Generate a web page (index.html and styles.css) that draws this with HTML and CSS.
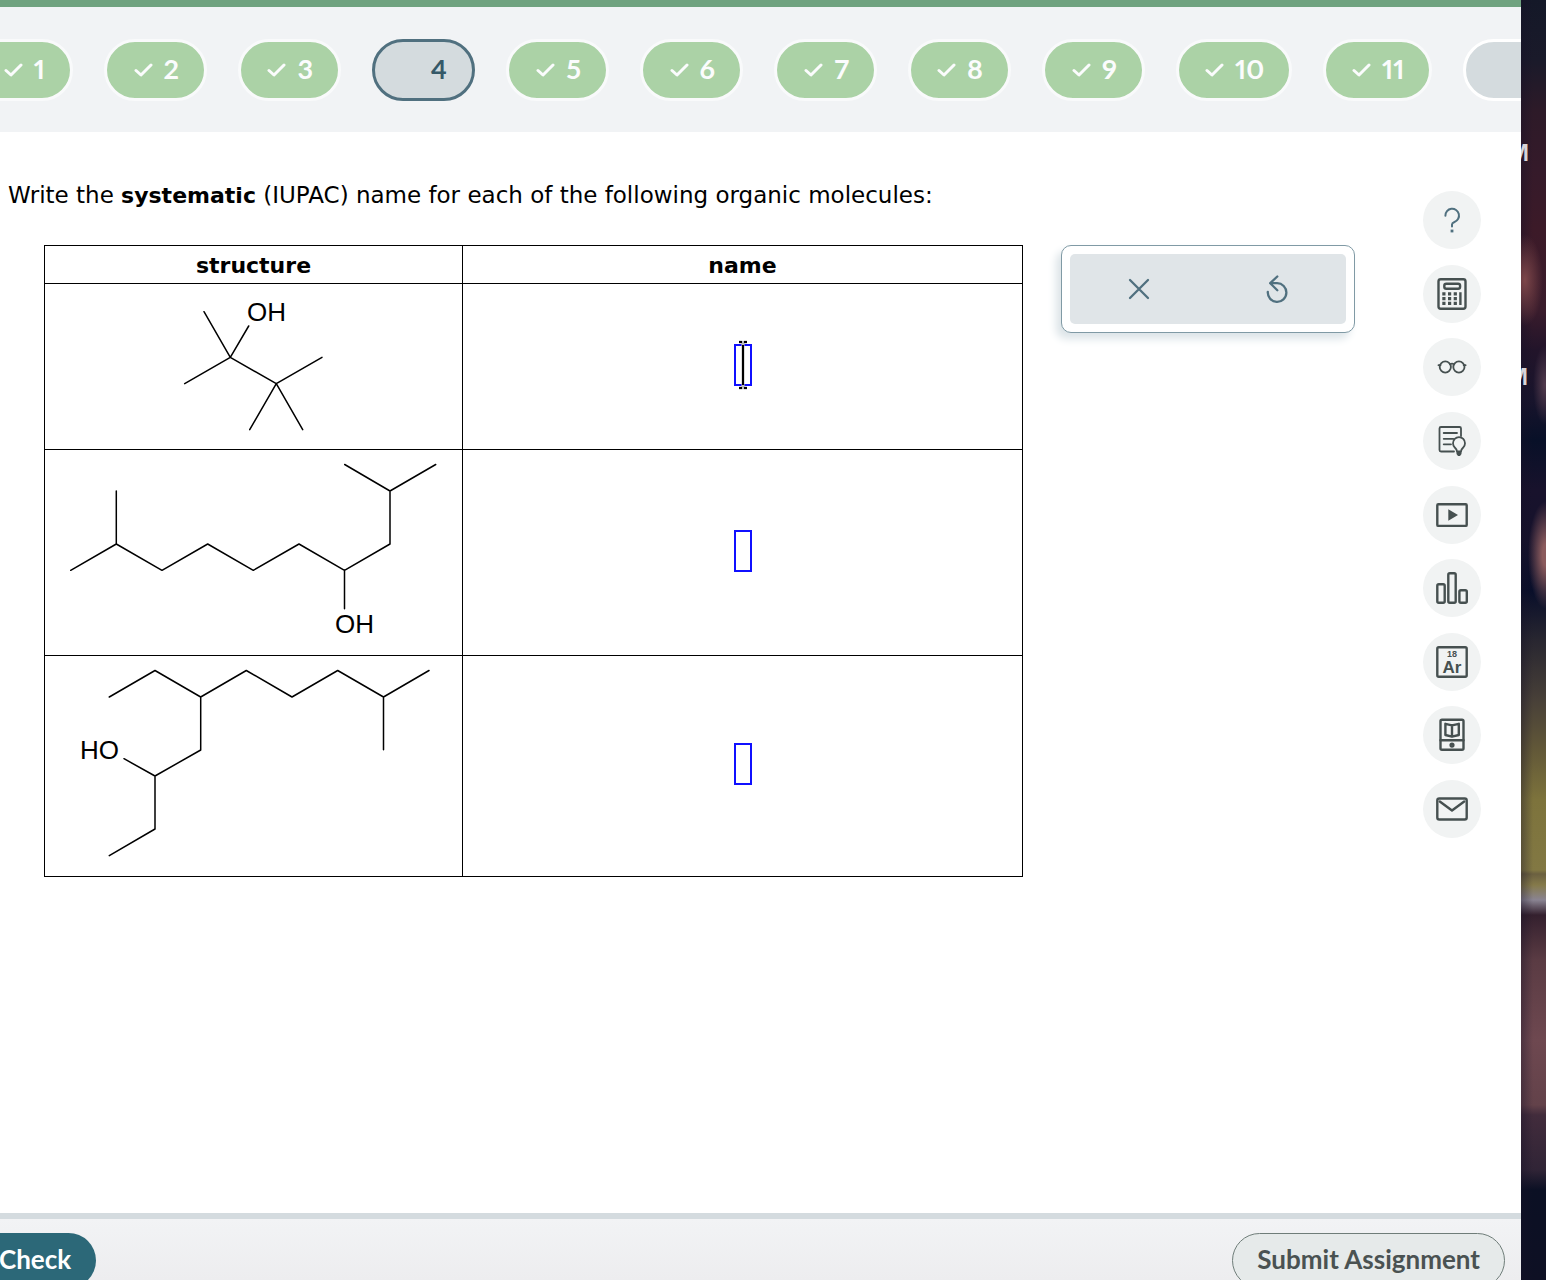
FILE: index.html
```html
<!DOCTYPE html>
<html lang="en">
<head>
<meta charset="utf-8">
<meta name="viewport" content="width=device-width, initial-scale=1">
<title>Naming organic molecules</title>
<link rel="stylesheet" href="styles.css">
</head>
<body>
<svg class="defs" aria-hidden="true">
  <symbol id="check" viewBox="0 0 19 16"><path d="M2 9.5 7 14 17 4"/></symbol>
</svg>
<div class="window">
  <nav class="steps" aria-label="Questions">
    <button class="pill pill-first"><svg class="tick"><use href="#check"/></svg>1</button>
    <button class="pill"><svg class="tick"><use href="#check"/></svg>2</button>
    <button class="pill"><svg class="tick"><use href="#check"/></svg>3</button>
    <button class="pill pill-current" aria-current="step">4</button>
    <button class="pill"><svg class="tick"><use href="#check"/></svg>5</button>
    <button class="pill"><svg class="tick"><use href="#check"/></svg>6</button>
    <button class="pill"><svg class="tick"><use href="#check"/></svg>7</button>
    <button class="pill"><svg class="tick"><use href="#check"/></svg>8</button>
    <button class="pill"><svg class="tick"><use href="#check"/></svg>9</button>
    <button class="pill"><svg class="tick"><use href="#check"/></svg>10</button>
    <button class="pill"><svg class="tick"><use href="#check"/></svg>11</button>
    <button class="pill pill-todo" aria-label="Next question"></button>
  </nav>

  <main class="main">
    <section class="problem">
      <p class="question">Write the <b>systematic</b> (IUPAC) name for each of the following organic molecules:</p>
      <div class="work">
        <table class="answers">
          <thead>
            <tr><th class="col-structure" scope="col">structure</th><th scope="col">name</th></tr>
          </thead>
          <tbody>
            <tr>
              <td>
                <svg class="molecule" width="417" height="165" viewBox="0 0 417 165">
                  <path d="M159 27.7 185.3 73.3 203.7 42M139.7 99.7 185.3 73.3 231.3 99.7 277 73.3M204.7 145.7 231.3 99.7 257.7 145.7"/>
                  <text x="202" y="37">OH</text>
                </svg>
              </td>
              <td class="name">
                <span class="field">
                  <input class="answer" type="text" aria-label="Name of molecule 1">
                  <svg class="ibeam" width="12" height="50" viewBox="0 0 12 50" aria-hidden="true">
                    <path class="halo" d="M2 2H4.5L6 4 7.5 2H10M2 48H4.5L6 46 7.5 48H10M6 4V46"/>
                    <path d="M2 2H5M7 2H10M2 48H5M7 48H10M6 5V45"/>
                  </svg>
                </span>
              </td>
            </tr>
            <tr>
              <td>
                <svg class="molecule" width="417" height="205" viewBox="0 0 417 205">
                  <path d="M71.3 41V94L25.7 120.3M71.3 94 117 120.3 162.7 94 208.3 120.3 254 94 299.5 120.3 345 94V41L299.7 14.5M345 41 390.7 14.5M299.5 120.3V158.7"/>
                  <text x="290" y="183">OH</text>
                </svg>
              </td>
              <td class="name"><span class="field"><input class="answer" type="text" aria-label="Name of molecule 2"></span></td>
            </tr>
            <tr>
              <td>
                <svg class="molecule" width="417" height="220" viewBox="0 0 417 220">
                  <path d="M64.3 41 110 14.5 155.7 41 201.3 14.5 247 41 292.7 14.5 338.5 41 384 14.5M338.5 41V93.7M155.7 41V94L110 120 79 102.7M110 120V173L64.3 199.7"/>
                  <text x="35" y="103">HO</text>
                </svg>
              </td>
              <td class="name"><span class="field"><input class="answer" type="text" aria-label="Name of molecule 3"></span></td>
            </tr>
          </tbody>
        </table>
        <div class="toolbox">
          <div class="tools">
            <button class="tool" aria-label="Clear"><svg width="28" height="28" viewBox="0 0 28 28"><path d="M5 5 23 23M23 5 5 23"/></svg></button>
            <button class="tool" aria-label="Undo"><svg width="28" height="28" viewBox="0 0 28 28"><path d="M14.3 1.5 7.2 8.2 14.3 15.2M7.5 8.2H14A9.3 9.3 0 1 1 4.8 16.8"/></svg></button>
          </div>
        </div>
      </div>
    </section>

    <aside class="rail" aria-label="Resources">
      <button class="round help" aria-label="Help"><svg viewBox="0 0 58 58"><path d="M22.4 24.8A6.8 6.8 0 1 1 31.5 31Q29 32 29 33.5V35.5"/><path class="solid" d="M27.6 38.6h2.8v2.8h-2.8z"/></svg></button>
      <button class="round" aria-label="Calculator"><svg viewBox="0 0 58 58"><rect x="15.5" y="14.3" width="27" height="29.4" rx="2.2"/><rect x="21.3" y="18.7" width="15.8" height="5" rx="2"/><path class="solid" d="M19.3 27.3h3.2v3.2h-3.2zM25 27.3h3.2v3.2h-3.2zM30.7 27.3h3.2v3.2h-3.2zM19.3 32h3.2v3.2h-3.2zM25 32h3.2v3.2h-3.2zM30.7 32h3.2v3.2h-3.2zM19.3 36.8h3.2v3.2h-3.2zM25 36.8h3.2v3.2h-3.2zM30.7 36.8h3.2v3.2h-3.2zM36.2 27.3h2.4v12.7h-2.4z"/></svg></button>
      <button class="round thin" aria-label="Reading view"><svg viewBox="0 0 58 58"><circle cx="22.3" cy="29" r="5.6"/><circle cx="35.9" cy="29" r="5.6"/><path d="M27 26.3Q29 25.1 31.2 26.3M15.5 27.2H17.5M40.7 27.2H42.6"/></svg></button>
      <button class="round thin" aria-label="Hint"><svg viewBox="0 0 58 58"><path d="M38 24V16.5Q38 15 36.5 15H18Q16.5 15 16.5 16.5V38Q16.5 39.5 18 39.5H31M20.7 21H34M20.7 26.8H30.3M20.7 32.3H28"/><path d="M34 39.5Q34 37.5 31.8 35.5A6 6 0 1 1 40.2 35.5Q38 37.5 38 39.5Z"/><path class="solid" d="M33.5 39h5v3l-1.5 2h-2l-1.5-2z"/></svg></button>
      <button class="round" aria-label="Video"><svg viewBox="0 0 58 58"><rect x="14.3" y="18.3" width="29.4" height="21.6" rx="1"/><path class="solid" d="M25.3 23.3 35 29 25.3 34.7z"/></svg></button>
      <button class="round" aria-label="Progress"><svg viewBox="0 0 58 58"><rect x="14.3" y="25.2" width="7.4" height="18.6" rx="1.5"/><rect x="25.3" y="14.3" width="7.4" height="29.5" rx="1.5"/><rect x="36.4" y="31.3" width="7.4" height="12.5" rx="1.5"/></svg></button>
      <button class="round" aria-label="Periodic table"><svg viewBox="0 0 58 58"><rect x="14.3" y="14.3" width="29.4" height="29.4" rx="1.5"/><text class="atomic" x="29" y="24">18</text><text class="symbol" x="29" y="40">Ar</text></svg></button>
      <button class="round" aria-label="Textbook"><svg viewBox="0 0 58 58"><rect x="17.5" y="13.8" width="23" height="30" rx="1.5"/><path d="M17.5 34.3H40.5M29 19.3 22.4 17.8V29L29 30.7 35.8 29V17.8ZM29 19.3V30.5"/><circle cx="29" cy="39.1" r="1.4"/></svg></button>
      <button class="round" aria-label="Messages"><svg viewBox="0 0 58 58"><rect x="14.3" y="18.5" width="29.4" height="21" rx="2"/><path d="M16.8 21.5 29 30.5 41.2 21.5"/></svg></button>
    </aside>
  </main>

  <footer class="footer">
    <button class="action check">Check</button>
    <button class="action submit">Submit Assignment</button>
  </footer>
</div>
<div class="desktop" aria-hidden="true">
  <span class="label label-top">M</span>
  <span class="label label-low">M</span>
</div>
</body>
</html>
```
FILE: styles.css
```css
* { box-sizing: border-box; }

body {
  margin: 0;
  display: flex;
  height: 100vh;
  overflow: hidden;
  background: #fff;
  color: #000;
  font-family: "DejaVu Sans", Verdana, sans-serif;
  font-size: 22px;
}

button { font: inherit; color: inherit; border: 0; padding: 0; cursor: pointer; }

svg { fill: none; stroke: currentColor; stroke-linecap: round; stroke-linejoin: round; }

.defs { position: absolute; width: 0; height: 0; }

.window {
  flex: 1;
  min-width: 0;
  display: flex;
  flex-direction: column;
  border-top: 7px solid #6fa27f;
}

/* question pills */
.steps {
  display: flex;
  gap: 31px;
  padding: 32px 0 31px;
  overflow: hidden;
  background: #f1f3f5;
}

.pill {
  flex: none;
  display: flex;
  align-items: center;
  justify-content: flex-end;
  gap: 11px;
  height: 62px;
  min-width: 103px;
  padding: 0 25px 2px 26px;
  border: 3px solid #f9fafb;
  border-radius: 31px;
  background: #abd2a6;
  color: #fbfcfd;
  font: bold 27px/32px Lato, sans-serif;
  font-variant-numeric: proportional-nums;
}

.pill-first { margin-left: -30px; }
.pill-current { border-color: #50707f; background: #d4dbde; color: #355968; }
.pill-todo { border-color: #fff; background: #d4dbde; }

.tick { width: 19px; height: 16px; stroke-width: 3; }

/* problem */
.main {
  flex: 1;
  min-height: 0;
  display: flex;
  align-items: flex-start;
  padding-right: 40px;
}

.problem { flex: 1; min-width: 0; padding: 47px 0 0 8px; }

.question { margin: 0; font-size: 23px; line-height: 32px; }
.question b { font-size: 22px; }

.work {
  display: flex;
  align-items: flex-start;
  gap: 38px;
  padding: 33px 0 0 36px;
}

.answers {
  flex: 0 1 979px;
  border-collapse: collapse;
  table-layout: fixed;
}

.answers th, .answers td { border: 1px solid #000; padding: 0; }
.answers th { height: 38px; padding-top: 3px; line-height: 30px; }
.col-structure { width: 418px; }

.molecule { display: block; stroke-width: 1.5; }
.molecule text {
  fill: #000;
  stroke: none;
  font: 26px "Liberation Sans", Arial, sans-serif;
}

.name { text-align: center; }
.field { position: relative; display: inline-block; vertical-align: middle; margin-bottom: 4px; }

.answer {
  display: block;
  width: 18px;
  height: 42px;
  padding: 0;
  border: 2px solid #1010ff;
  background: #fff;
  text-align: center;
}

.ibeam { position: absolute; inset: -4px auto auto 3px; stroke: #000; stroke-width: 2; }
.ibeam path { stroke-linecap: butt; }
.ibeam .halo { stroke: #bbb; stroke-width: 3; }

.toolbox {
  flex: 0 0 294px;
  padding: 8px;
  border: 1px solid #809aa5;
  border-radius: 10px;
  background: #fff;
  box-shadow: -5px 6px 8px #dce4e8;
}

.tools { display: flex; border-radius: 5px; background: #e0e5e8; }
.tool { flex: 1; height: 70px; display: grid; place-items: center; background: none; color: #50707f; }
.tool svg { stroke-width: 2.3; }

/* resource rail */
.rail {
  display: flex;
  flex-direction: column;
  justify-content: space-between;
  height: 647px;
  margin-top: 59px;
}

.round {
  width: 58px;
  height: 58px;
  border-radius: 50%;
  background: #f1f3f3;
  color: #465050;
}

.round svg { display: block; width: 58px; height: 58px; stroke-width: 2.4; }
.thin svg { stroke-width: 1.8; }
.help { color: #50707f; }
.help svg { stroke-width: 2; }
.solid { fill: currentColor; stroke: none; }
.round text { fill: currentColor; stroke: none; text-anchor: middle; font-family: "Liberation Sans", Arial, sans-serif; font-weight: bold; }
.atomic { font-size: 9px; }
.symbol { font-size: 17px; }

/* bottom bar */
.footer {
  flex: none;
  display: flex;
  justify-content: space-between;
  align-items: flex-start;
  height: 67px;
  padding: 14px 16px 0 0;
  overflow: hidden;
  border-top: 6px solid #d4dbdf;
  background: linear-gradient(#f2f3f5, #ededef);
}

.action {
  height: 55px;
  padding: 0 24px 4px;
  border: 1px solid transparent;
  border-radius: 28px;
  font: bold 26px/48px Lato, sans-serif;
}

.check { margin-left: -26px; background: #2c6878; color: #fff; }
.submit { border-color: #6f7d79; background: #e6eaea; color: #4a5252; }

/* strip of wallpaper beside the window */
.desktop {
  position: relative;
  flex: 0 0 25px;
  overflow: hidden;
  background:
    radial-gradient(18px 46px at 4px 280px, #7d4649, transparent),
    radial-gradient(12px 40px at 24px 385px, #523b4d, transparent),
    radial-gradient(18px 54px at 25px 555px, #8b5b5d 20%, transparent),
    linear-gradient(90deg, #15102660, transparent 12px),
    linear-gradient(#141828 0, #1a1a2a 60px, #2d1a28 110px, #351a2a 170px, #3c1a28 230px, #3a1c2c 310px, #22142a 350px, #18142c 400px, #081028 440px, #18122c 490px, #16122c 540px, #080e2a 590px, #282630 640px, #484038 700px, #625838 750px, #7d733c 800px, #827843 870px, #6b6040 874px, #857a4a 885px, #8a8492 900px, #34202e 915px, #5a3b43 960px, #6e4850 1040px, #63424a 1105px, #422c3c 1115px, #302436 1170px, #0b1024 1190px, #0e1024 1280px);
}

.label {
  position: absolute;
  color: #d8d4d8;
  font: bold 24px/28px "Liberation Sans", Arial, sans-serif;
}
.label-top { left: -12px; top: 139px; }
.label-low { left: -13px; top: 363px; }
```
